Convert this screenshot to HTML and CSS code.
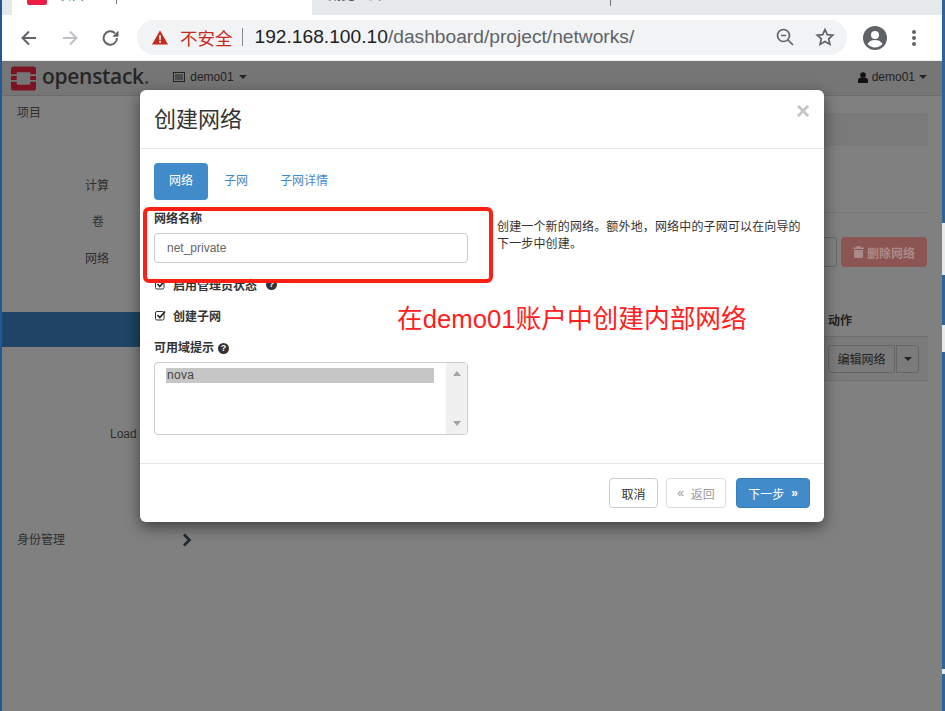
FILE: index.html
```html
<!DOCTYPE html>
<html lang="zh-CN">
<head>
<meta charset="utf-8">
<title>创建网络</title>
<link rel="stylesheet" href="styles.css">
</head>
<body>
<div class="screen">
  <div class="desk-left"></div>
  <div class="browser">
    <div class="tabstrip">
      <div class="tab-corner"></div>
      <div class="tab active"><span class="favicon"></span><span class="tab-title">项目 -</span><span class="tab-sep"></span></div>
      <div class="tab inactive">
        <span class="tab-title second">概览 - 云</span>
        <span class="tab-sep far"></span>
        <span class="tab-title third">-</span>
      </div>
    </div>
    <div class="toolbar">
      <svg class="nav-ic" width="20" height="20" viewBox="0 0 20 20"><path d="M17 10H4M10 3.500 3.500 10l6.500 6.500" fill="none" stroke="#5f6368" stroke-width="2"/></svg>
      <svg class="nav-ic" width="20" height="20" viewBox="0 0 20 20"><path d="M3 10h13M10 3.500l6.500 6.500-6.500 6.500" fill="none" stroke="#bdc1c6" stroke-width="2"/></svg>
      <svg class="nav-ic" width="20" height="20" viewBox="0 0 20 20"><path d="M16 10a6.700 6.700 0 1 1-2-4.800" fill="none" stroke="#5f6368" stroke-width="2"/><path d="M17.500 2.500v6.200h-6.200z" fill="#5f6368"/></svg>
      <div class="omnibox">
        <svg class="warn" width="16" height="15" viewBox="0 0 17 15"><path d="M8.500 0 17 15H0z" fill="#c5291c"/><path d="M7.600 5h1.800v5H7.600zM7.600 11h1.800v2H7.600z" fill="#fff"/></svg>
        <span class="insecure">不安全</span>
        <span class="omni-sep"></span>
        <span class="url"><span class="host">192.168.100.10</span>/dashboard/project/networks/</span>
        <svg class="omni-ic" width="20" height="20" viewBox="0 0 20 20"><circle cx="8.500" cy="8.500" r="6" fill="none" stroke="#5f6368" stroke-width="1.700"/><path d="M6 8.500h5M13 13l5 5" stroke="#5f6368" stroke-width="1.700"/></svg>
        <svg class="omni-ic star" width="20" height="20" viewBox="0 0 20 20"><path d="m10 2.500 2.300 5.100 5.500.6-4.100 3.700 1.200 5.500-4.900-2.800-4.900 2.800 1.200-5.500L2.200 8.200l5.500-.6z" fill="none" stroke="#5f6368" stroke-width="1.700"/></svg>
      </div>
      <svg class="avatar" width="24" height="24" viewBox="0 0 24 24"><circle cx="12" cy="12" r="12" fill="#5f6368"/><circle cx="12" cy="9" r="4" fill="#fff"/><path d="M4.500 18c2-3.300 4.500-4 7.500-4s5.500.7 7.500 4a10 10 0 0 1-15 0z" fill="#fff"/></svg>
      <svg class="dots" width="6" height="18" viewBox="0 0 6 18"><circle cx="3" cy="3" r="2" fill="#5f6368"/><circle cx="3" cy="9" r="2" fill="#5f6368"/><circle cx="3" cy="15" r="2" fill="#5f6368"/></svg>
    </div>
    <div class="page">
      <header class="topbar">
        <svg class="logo" width="25" height="25" viewBox="0 0 26 25"><path fill-rule="evenodd" d="M3 0h20a3 3 0 0 1 3 3v5h-6V6H6v2H0V3a3 3 0 0 1 3-3zM0 10h6v4H0zM20 10h6v4h-6zM0 16h6v3h14v-3h6v6a3 3 0 0 1-3 3H3a3 3 0 0 1-3-3z" fill="#7c1322"/></svg>
        <span class="brand">openstack<small>.</small></span>
        <span class="project-menu">
          <svg width="12" height="10" viewBox="0 0 12 10"><path fill-rule="evenodd" d="M0 0h12v10H0zM1 1v8h10V1zM2 2.500h8v1H2zM2 4.500h8v1H2zM2 6.500h8v1H2z" fill="#222"/></svg>
          demo01 <i class="caret"></i>
        </span>
        <span class="user-menu">
          <svg width="10" height="11" viewBox="0 0 10 11"><circle cx="5" cy="3" r="2.800" fill="#111"/><path d="M0 11V8c0-2 2-2.500 5-2.500S10 6 10 8v3z" fill="#111"/></svg>
          demo01 <i class="caret"></i>
        </span>
      </header>
      <div class="content">
        <nav class="sidebar">
          <div class="nav-item top">项目</div>
          <div class="nav-item compute">计算</div>
          <div class="nav-item volume">卷</div>
          <div class="nav-item network">网络</div>
          <div class="nav-current"></div>
          <div class="nav-item load">Load</div>
          <div class="nav-item identity">身份管理<svg width="10" height="14" viewBox="0 0 10 14"><path d="M2 1.500 7.500 7 2 12.500" fill="none" stroke="#1d2a36" stroke-width="2.600"/></svg></div>
        </nav>
        <main class="main">
          <div class="breadcrumb"></div>
          <div class="page-rule"></div>
          <div class="actions">
            <span class="btn-ghost"></span>
            <span class="btn-danger"><svg width="11" height="12" viewBox="0 0 11 12"><path d="M4 0h3l1 1.500h3V3H0V1.500h3zM1 4h9v7a1 1 0 0 1-1 1H2a1 1 0 0 1-1-1z" fill="#aa8a88"/></svg>删除网络</span>
          </div>
          <div class="thead"><span>动作</span></div>
          <div class="trow">
            <span class="edit-btn">编辑网络</span><span class="edit-caret"><i class="caret"></i></span>
          </div>
        </main>
      </div>

      <section class="modal">
        <div class="modal-head">
          <h2>创建网络</h2>
          <span class="close">×</span>
        </div>
        <div class="modal-body">
          <div class="pills">
            <span class="pill on">网络</span>
            <span class="pill">子网</span>
            <span class="pill">子网详情</span>
          </div>
          <div class="form-grid">
            <div class="form-col">
              <label class="field-label">网络名称</label>
              <input class="text-input" type="text" value="net_private">
              <div class="check first"><svg class="cb" width="11" height="11" viewBox="0 0 11 11"><rect x=".5" y="1.500" width="8.500" height="8.500" rx="1.500" fill="none" stroke="#333"/><path d="m2.500 5 2.300 2.500L10 1.500" fill="none" stroke="#222" stroke-width="1.600"/></svg>启用管理员状态<i class="help">?</i></div>
              <div class="check"><svg class="cb" width="11" height="11" viewBox="0 0 11 11"><rect x=".5" y="1.500" width="8.500" height="8.500" rx="1.500" fill="none" stroke="#333"/><path d="m2.500 5 2.300 2.500L10 1.500" fill="none" stroke="#222" stroke-width="1.600"/></svg>创建子网</div>
              <label class="field-label zone">可用域提示<i class="help">?</i></label>
              <div class="listbox">
                <div class="options"><div class="option">nova</div></div>
                <div class="scrollbar"><i class="arrow up"></i><i class="arrow down"></i></div>
              </div>
            </div>
            <p class="hint">创建一个新的网络。额外地，网络中的子网可以在向导的下一步中创建。</p>
          </div>
        </div>
        <div class="modal-foot">
          <span class="btn cancel">取消</span>
          <span class="btn disabled"><b>«</b>返回</span>
          <span class="btn primary">下一步<b>»</b></span>
        </div>
      </section>
      <div class="annot-box"></div>
      <div class="annot-text">在demo01账户中创建内部网络</div>
    </div>
  </div>
  <div class="desk-right">
    <i class="seg white-a"></i><i class="seg white-b"></i><i class="seg white-c"></i>
  </div>
</div>
</body>
</html>
```

FILE: styles.css
```css
* { box-sizing: border-box; }
html, body { margin: 0; height: 100%; overflow: hidden; }
body { font-family: "Liberation Sans", "Noto Sans CJK SC", sans-serif; font-size: 12px; color: #333; }
.screen { display: flex; width: 945px; height: 711px; }
.desk-left { width: 2px; background: #1f5a96; }
.desk-right { width: 3px; background: #2e6496; display: flex; flex-direction: column; }
.seg { display: block; width: 3px; background: #e8e8e8; }
.white-a { height: 52px; margin-top: 223px; }
.white-b { height: 27px; margin-top: 50px; }
.white-c { height: 5px; margin-top: 317px; }
.browser { width: 940px; display: flex; flex-direction: column; }

/* Tabs */
.tabstrip { height: 15px; display: flex; background: #e6e9ec; overflow: hidden; }
.tab-corner { width: 10px; background: #e6e9ec; border-radius: 0 0 0 8px; }
.tab { position: relative; display: flex; align-items: flex-end; padding-bottom: 13px; }
.tab.active { width: 300px; background: #fff; padding-left: 15px; }
.tab.inactive { flex: 1; border-bottom-left-radius: 8px; background: #e6e9ec; }
.favicon { width: 20px; height: 14px; background: #ec1c45; border-radius: 2px; margin-bottom: -3px; }
.tab-title { font-size: 14px; line-height: 16px; color: #5a5a5a; margin-left: 10px; }
.tab-title.second { margin-left: 15px; }
.tab-sep { width: 1px; height: 4px; background: #777; position: absolute; top: 0; left: 104px; }
.tab-sep.far { left: 298px; height: 6px; }
.tab-title.third { position: absolute; left: 322px; bottom: 13px; margin: 0; }

/* Toolbar */
.toolbar { height: 46px; display: flex; align-items: center; background: #fff; padding: 0 0 0 17px; border-bottom: 1px solid #f0f0f0; }
.nav-ic { margin-right: 21px; flex: none; }
.nav-ic:nth-child(3) { margin-right: 16px; }
.omnibox { width: 710px; height: 35px; margin-top: -1px; border-radius: 18px; background: #f1f3f4; display: flex; align-items: center; padding-left: 15px; }
.warn { flex: none; }
.insecure { margin-left: 12px; font-size: 17.500px; color: #c5291c; }
.omni-sep { width: 1px; height: 18px; background: #888; margin: 0 12px 0 9px; }
.url { font-size: 19.200px; color: #5f6368; flex: 1; white-space: nowrap; }
.host { color: #202124; }
.omni-ic { flex: none; margin-right: 20px; }
.omni-ic.star { margin-right: 12px; }
.avatar { margin-left: 16px; flex: none; }
.dots { margin-left: 24px; flex: none; }

/* Page behind the dialog */
.page { position: relative; flex: 1; background: #808080; overflow: hidden; }
.topbar { height: 35px; display: flex; align-items: center; background: #767676; border-bottom: 1px solid #6b6b6b; padding: 0 15px 0 9px; color: #222; }
.logo { flex: none; }
.brand { font-family: "Open Sans", sans-serif; font-size: 21px; font-weight: 600; letter-spacing: -.3px; color: #262626; margin: 0 0 4px 6px; line-height: 25px; }
.brand small { font-size: 21px; color: #444; }
.project-menu { display: flex; align-items: center; gap: 5px; margin: 0 0 2px 24px; }
.user-menu { display: flex; align-items: center; gap: 4px; margin: 0 0 2px auto; }
.caret { display: inline-block; width: 0; height: 0; border: 4px solid transparent; border-top-color: #222; border-bottom: 0; }
.content { display: flex; }
.sidebar { width: 190px; flex: none; display: flex; flex-direction: column; color: #2e2e2e; }
.nav-item { line-height: 16px; white-space: nowrap; }
.top { margin: 9px 0 0 15px; }
.compute { margin: 57px 0 0 83px; }
.volume { margin: 20px 0 0 90px; }
.network { margin: 21px 0 0 83px; }
.nav-current { height: 35px; margin-top: 45px; background: #1f4465; }
.load { margin: 79px 0 0 108px; }
.identity { margin: 90px 0 0 15px; display: flex; align-items: center; justify-content: space-between; }
.main { flex: 1; padding: 17px 14px 0 0; display: flex; flex-direction: column; align-items: stretch; }
.breadcrumb { height: 33px; background: #7a7a7a; border-radius: 3px; }
.page-rule { height: 1px; background: #767676; margin-top: 66px; }
.actions { display: flex; justify-content: flex-end; gap: 4px; margin-top: 24px; margin-right: 1px; }
.btn-ghost { width: 60px; height: 30px; border: 1px solid #666; border-radius: 3px; }
.btn-danger { width: 86px; height: 30px; background: #8a5553; border-radius: 4px; display: flex; align-items: center; justify-content: center; gap: 3px; color: #aa8a88; font-weight: 700; }
.thead { margin-top: 44px; height: 26px; border-bottom: 1px solid #6f6f6f; display: flex; justify-content: flex-end; padding-right: 76px; font-weight: 700; color: #222; }
.trow { height: 44px; background: #7b7b7b; border-bottom: 1px solid #6f6f6f; display: flex; align-items: center; justify-content: flex-end; padding-right: 9px; }
.edit-btn { width: 67px; height: 28px; border: 1px solid #666; border-radius: 3px 0 0 3px; display: flex; align-items: center; justify-content: center; color: #222; }
.edit-caret { width: 23px; height: 28px; border: 1px solid #666; margin-left: 1px; border-radius: 0 3px 3px 0; display: flex; align-items: center; justify-content: center; }

/* Dialog */
.modal { position: absolute; left: 138px; top: 29px; width: 684px; height: 432px; background: #fff; border-radius: 6px; box-shadow: 0 5px 15px rgba(0,0,0,.5); display: flex; flex-direction: column; }
.modal-head { height: 59px; padding: 0 14px; border-bottom: 1px solid #e5e5e5; display: flex; align-items: center; justify-content: space-between; }
.modal-head h2 { margin: 0 0 5px; font-size: 22px; font-weight: 400; color: #333; }
.close { font-size: 24px; font-weight: 700; color: #c4c4c4; margin-top: -16px; }
.modal-body { flex: 1; padding: 14px 14px 0; }
.pills { display: flex; }
.pill { height: 37px; padding: 0 16px 4px; display: flex; align-items: center; border-radius: 4px; color: #428bca; }
.pill.on { background: #428bca; color: #fff; padding: 0 15px 4px; }
.pill:nth-child(3) { padding: 0 16px 4px 14px; margin-left: 2px; }
.form-grid { display: grid; grid-template-columns: 314px 1fr; column-gap: 29px; margin-top: 11px; }
.field-label { display: block; font-weight: 700; line-height: 16px; color: #333; }
.text-input { display: block; width: 314px; height: 30px; margin-top: 6px; padding: 0 12px; border: 1px solid #ccc; border-radius: 4px; font: 12px "Liberation Sans", sans-serif; color: #666; background: #fff; }
.check { display: flex; align-items: center; height: 16px; margin-top: 15px; font-weight: 700; }
.check.first { margin-top: 13px; }
.cb { margin: 0 7px 0 1px; }
.help { display: inline-flex; width: 11px; height: 11px; margin-left: 9px; border-radius: 50%; background: #333; color: #fff; font: 700 9px/11px "Liberation Sans", sans-serif; justify-content: center; }
.zone .help { margin-left: 4px; vertical-align: middle; }
.field-label.zone { margin-top: 17px; }
.listbox { display: flex; height: 73px; margin-top: 6px; border: 1px solid #ccc; border-radius: 4px; overflow: hidden; }
.options { flex: 1; padding: 5px 12px 0 11px; }
.option { height: 15px; line-height: 15px; background: #c6c6c6; padding-left: 1px; letter-spacing: .3px; color: #444; }
.scrollbar { width: 21px; background: #f0f0f0; display: flex; flex-direction: column; justify-content: space-between; align-items: center; padding: 8px 0; }
.arrow { width: 0; height: 0; border-left: 4.500px solid transparent; border-right: 4.500px solid transparent; }
.arrow.up { border-bottom: 5px solid #a3a3a3; }
.arrow.down { border-top: 5px solid #a3a3a3; }
.hint { margin: 8px 0 0; line-height: 17px; width: 312px; letter-spacing: .15px; color: #333; }
.modal-foot { height: 59px; border-top: 1px solid #e5e5e5; display: flex; justify-content: flex-end; align-items: flex-start; padding: 14px 14px 0; }
.btn { height: 30px; display: flex; align-items: center; justify-content: center; border: 1px solid #ccc; border-radius: 4px; color: #333; background: #fff; }
.btn.cancel { width: 49px; margin-right: 8px; }
.btn.disabled { width: 60px; margin-right: 10px; color: #999; border-color: #ddd; gap: 7px; }
.btn.disabled b { font-weight: 400; }
.btn.primary { width: 74px; background: #428bca; border-color: #357ebd; color: #fff; gap: 7px; }

/* Annotation drawn over the screenshot */
.annot-box { position: absolute; left: 141px; top: 146px; width: 350px; height: 76px; border: 4px solid #ff2015; border-radius: 6px; }
.annot-text { position: absolute; left: 395px; top: 241px; font-size: 25.700px; line-height: 34px; color: #ff2020; white-space: nowrap; }
```
